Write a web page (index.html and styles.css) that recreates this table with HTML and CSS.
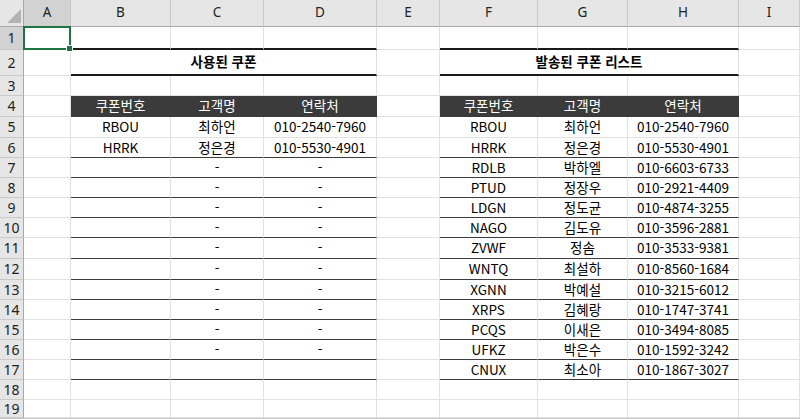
FILE: index.html
```html
<!DOCTYPE html>
<html lang="ko">
<head>
<meta charset="utf-8">
<title>쿠폰 시트</title>
<link rel="stylesheet" href="styles.css">
</head>
<body>
<table class="sheet">
  <colgroup>
    <col class="w-rh"><col class="w-a"><col class="w-b"><col class="w-c"><col class="w-d"><col class="w-e"><col class="w-f"><col class="w-g"><col class="w-h"><col class="w-i">
  </colgroup>
  <tr class="hd">
    <th class="corner"><svg class="tri" width="24" height="26" viewBox="0 0 24 26"><polygon points="21,9 21,23 7,23" fill="#b3b3b3"/></svg></th>
    <th class="ch selh">A</th><th class="ch">B</th><th class="ch">C</th><th class="ch">D</th><th class="ch">E</th><th class="ch">F</th><th class="ch">G</th><th class="ch">H</th><th class="ch">I</th>
  </tr>
  <tr class="r1">
    <th class="rh selh">1</th><td class="sel"></td><td class="tk"></td><td class="tk"></td><td class="tk"></td><td></td><td class="tk"></td><td class="tk"></td><td class="tk"></td><td></td>
  </tr>
  <tr class="r2">
    <th class="rh">2</th><td></td><td colspan="3" class="title tk">사용된 쿠폰</td><td></td><td colspan="3" class="title tk">발송된 쿠폰 리스트</td><td></td>
  </tr>
  <tr class="r3">
    <th class="rh">3</th><td></td><td></td><td></td><td></td><td></td><td></td><td></td><td></td><td></td>
  </tr>
  <tr class="r4">
    <th class="rh">4</th><td></td><td class="dk">쿠폰번호</td><td class="dk">고객명</td><td class="dk">연락처</td><td></td><td class="dk">쿠폰번호</td><td class="dk">고객명</td><td class="dk">연락처</td><td></td>
  </tr>
  <tr class="r21">
    <th class="rh">5</th><td></td><td>RBOU</td><td class="ko">최하언</td><td>010-2540-7960</td><td></td><td>RBOU</td><td class="ko">최하언</td><td>010-2540-7960</td><td></td>
  </tr>
  <tr class="r20">
    <th class="rh">6</th><td></td><td class="ln">HRRK</td><td class="ln ko">정은경</td><td class="ln">010-5530-4901</td><td></td><td class="ln">HRRK</td><td class="ln ko">정은경</td><td class="ln">010-5530-4901</td><td></td>
  </tr>
  <tr class="r20">
    <th class="rh">7</th><td></td><td class="ln"></td><td class="ln">-</td><td class="ln">-</td><td></td><td class="ln">RDLB</td><td class="ln ko">박하엘</td><td class="ln">010-6603-6733</td><td></td>
  </tr>
  <tr class="r20">
    <th class="rh">8</th><td></td><td class="ln"></td><td class="ln">-</td><td class="ln">-</td><td></td><td class="ln">PTUD</td><td class="ln ko">정장우</td><td class="ln">010-2921-4409</td><td></td>
  </tr>
  <tr class="r20">
    <th class="rh">9</th><td></td><td class="ln"></td><td class="ln">-</td><td class="ln">-</td><td></td><td class="ln">LDGN</td><td class="ln ko">정도균</td><td class="ln">010-4874-3255</td><td></td>
  </tr>
  <tr class="r20">
    <th class="rh">10</th><td></td><td class="ln"></td><td class="ln">-</td><td class="ln">-</td><td></td><td class="ln">NAGO</td><td class="ln ko">김도유</td><td class="ln">010-3596-2881</td><td></td>
  </tr>
  <tr class="r21">
    <th class="rh">11</th><td></td><td class="ln"></td><td class="ln">-</td><td class="ln">-</td><td></td><td class="ln">ZVWF</td><td class="ln ko">정솜</td><td class="ln">010-3533-9381</td><td></td>
  </tr>
  <tr class="r21">
    <th class="rh">12</th><td></td><td class="ln"></td><td class="ln">-</td><td class="ln">-</td><td></td><td class="ln">WNTQ</td><td class="ln ko">최설하</td><td class="ln">010-8560-1684</td><td></td>
  </tr>
  <tr class="r20">
    <th class="rh">13</th><td></td><td class="ln"></td><td class="ln">-</td><td class="ln">-</td><td></td><td class="ln">XGNN</td><td class="ln ko">박예설</td><td class="ln">010-3215-6012</td><td></td>
  </tr>
  <tr class="r20">
    <th class="rh">14</th><td></td><td class="ln"></td><td class="ln">-</td><td class="ln">-</td><td></td><td class="ln">XRPS</td><td class="ln ko">김혜랑</td><td class="ln">010-1747-3741</td><td></td>
  </tr>
  <tr class="r20">
    <th class="rh">15</th><td></td><td class="ln"></td><td class="ln">-</td><td class="ln">-</td><td></td><td class="ln">PCQS</td><td class="ln ko">이새은</td><td class="ln">010-3494-8085</td><td></td>
  </tr>
  <tr class="r20">
    <th class="rh">16</th><td></td><td class="ln"></td><td class="ln">-</td><td class="ln">-</td><td></td><td class="ln">UFKZ</td><td class="ln ko">박은수</td><td class="ln">010-1592-3242</td><td></td>
  </tr>
  <tr class="r20">
    <th class="rh">17</th><td></td><td class="ln"></td><td class="ln"></td><td class="ln"></td><td></td><td class="ln">CNUX</td><td class="ln ko">최소아</td><td class="ln">010-1867-3027</td><td></td>
  </tr>
  <tr class="r20">
    <th class="rh">18</th><td></td><td></td><td></td><td></td><td></td><td></td><td></td><td></td><td></td>
  </tr>
  <tr class="r18">
    <th class="rh">19</th><td></td><td></td><td></td><td></td><td></td><td></td><td></td><td></td><td></td>
  </tr>
</table>
<div class="hscroll">
  <div class="tabs"></div><div class="gap"></div><div class="bar"></div>
</div>
</body>
</html>
```

FILE: styles.css
```css
* { box-sizing: border-box; }
html, body { margin: 0; padding: 0; background: #fff; }
body {
  width: 800px;
  height: 419px;
  overflow: hidden;
  font-family: "Noto Sans CJK KR", "Noto Sans", sans-serif;
}
.sheet {
  border-collapse: separate;
  border-spacing: 0;
  table-layout: fixed;
  width: 800px;
}
.w-rh { width: 24px; }
.w-a { width: 47px; }
.w-b { width: 100px; }
.w-c { width: 93px; }
.w-d { width: 113px; }
.w-e { width: 63px; }
.w-f { width: 98px; }
.w-g { width: 90px; }
.w-h { width: 111px; }
.w-i { width: 61px; }

.sheet td, .sheet th {
  padding: 0;
  border-right: 1px solid #e1e1e1;
  border-bottom: 1px solid #e1e1e1;
  text-align: center;
  vertical-align: middle;
  font-size: 13.5px;
  font-weight: 400;
  color: #000;
  white-space: nowrap;
  overflow: hidden;
  line-height: 1;
}
.hd th { height: 26px; }
.r1 > * { height: 23px; }
.r2 > * { height: 26px; }
.r3 > * { height: 20px; }
.r4 > * { height: 21px; }
.r21 > * { height: 21px; }
.r20 > * { height: 20px; }
.r18 > * { height: 18px; }

.sheet .ch {
  background: #e6e6e6;
  border-right: 1px solid #c9c9c9;
  border-bottom: 1px solid #a8a8a8;
  font-family: "Noto Sans", sans-serif;
  font-size: 13.5px;
  color: #222;
}
.sheet .rh {
  background: #e6e6e6;
  border-right: 1px solid #a8a8a8;
  border-bottom: 1px solid #c9c9c9;
  font-family: "Noto Sans", sans-serif;
  font-size: 14px;
  color: #222;
}
.sheet .corner {
  background: #e6e6e6;
  border-right: 1px solid #a8a8a8;
  border-bottom: 1px solid #a8a8a8;
  vertical-align: top;
}
.tri { display: block; }
.sheet .selh { background: #d2d2d2; }

.sheet .sel { position: relative; overflow: visible; }
.sel::after {
  content: "";
  position: absolute;
  left: -1px; top: -1px; right: -1px; bottom: -1px;
  border: 2px solid #217346;
}
.sel::before {
  content: "";
  position: absolute;
  right: -3px; bottom: -3px;
  width: 5px; height: 5px;
  background: #217346;
  border: 1px solid #fff;
  z-index: 2;
}

.sheet .tk { border-bottom: 2px solid #1a1a1a; }
.sheet .title {
  font-weight: 700;
  font-size: 13.5px;
  color: #000;
}
.sheet .dk {
  background: #3b3b3b;
  border-right-color: #3b3b3b;
  border-bottom-color: #3b3b3b;
  color: #fff;
  font-size: 13.5px;
}
.sheet .ln { border-bottom-color: #3d3d3d; }
.sheet .ko { font-size: 13.5px; }

.hscroll {
  display: flex;
  height: 2px;
  border-top: 1px solid #c6c6c6;
}
```
